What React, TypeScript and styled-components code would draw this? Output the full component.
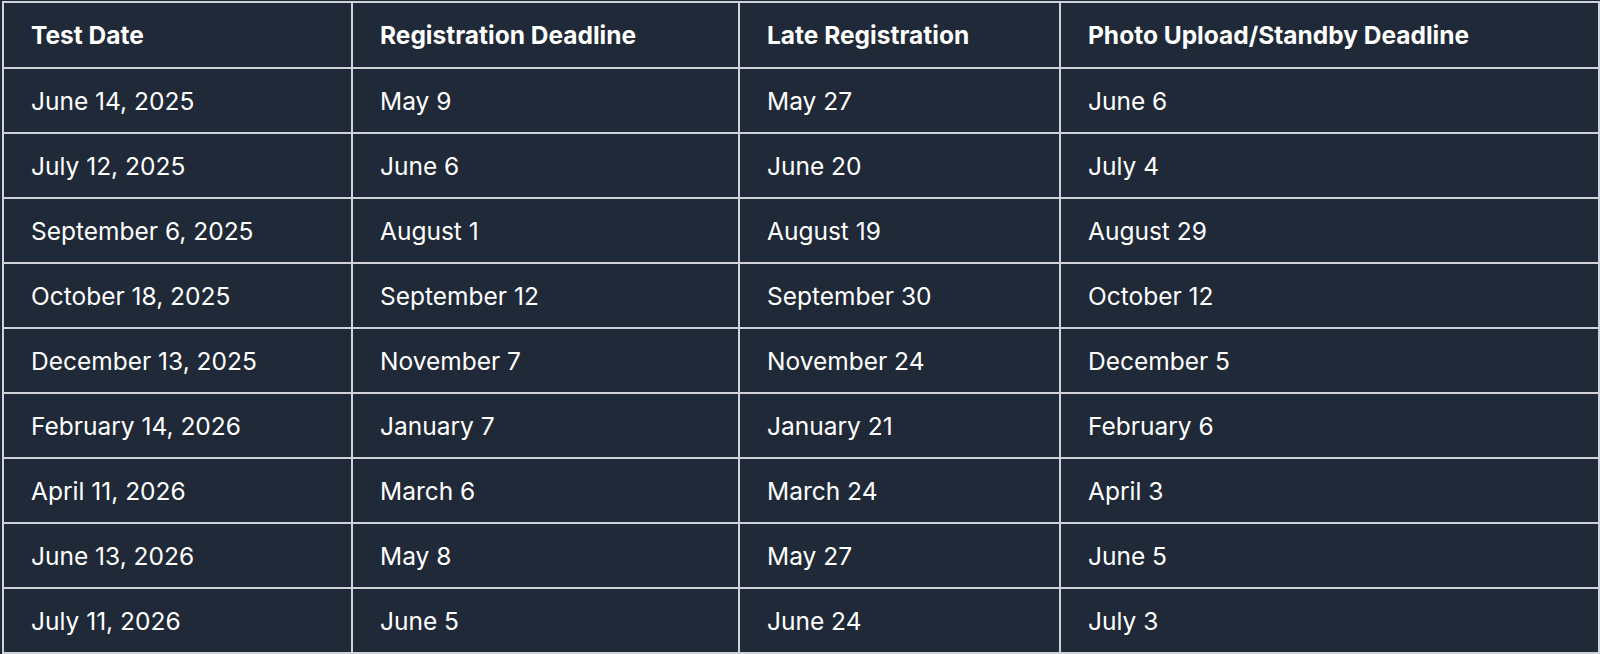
import React from "react";
import styled, { createGlobalStyle } from "styled-components";

const Global = createGlobalStyle`
  html, body { margin: 0; padding: 0; background: #1f2937; }
  body { font-family: Inter, "Noto Sans", sans-serif; }
`;

const Wrap = styled.div`
  padding: 1px 2px 1px 2px;
`;

const Table = styled.table`
  width: 100%;
  border-collapse: collapse;
  background: #1f2937;
  color: #ffffff;
  table-layout: fixed;
`;

const Th = styled.th`
  height: 66px;
  padding: 0 27px;
  text-align: left;
  font-weight: 700;
  font-size: 24.5px;
  border: 2px solid #cfd3d9;
  box-sizing: border-box;
`;

const Td = styled.td`
  height: 65px;
  padding: 0 27px;
  text-align: left;
  font-weight: 400;
  font-size: 24.5px;
  border: 2px solid #cfd3d9;
  box-sizing: border-box;
`;

const headers = ["Test Date", "Registration Deadline", "Late Registration", "Photo Upload/Standby Deadline"];
const widths = [349, 387, 321, 539];

const rows = [
  ["June 14, 2025", "May 9", "May 27", "June 6"],
  ["July 12, 2025", "June 6", "June 20", "July 4"],
  ["September 6, 2025", "August 1", "August 19", "August 29"],
  ["October 18, 2025", "September 12", "September 30", "October 12"],
  ["December 13, 2025", "November 7", "November 24", "December 5"],
  ["February 14, 2026", "January 7", "January 21", "February 6"],
  ["April 11, 2026", "March 6", "March 24", "April 3"],
  ["June 13, 2026", "May 8", "May 27", "June 5"],
  ["July 11, 2026", "June 5", "June 24", "July 3"],
];

export default function App() {
  return (
    <>
      <Global />
      <Wrap>
        <Table>
          <colgroup>
            {widths.map((w, i) => (
              <col key={i} style={{ width: w }} />
            ))}
          </colgroup>
          <thead>
            <tr>
              {headers.map((h) => (
                <Th key={h}>{h}</Th>
              ))}
            </tr>
          </thead>
          <tbody>
            {rows.map((r, i) => (
              <tr key={i}>
                {r.map((c, j) => (
                  <Td key={j}>{c}</Td>
                ))}
              </tr>
            ))}
          </tbody>
        </Table>
      </Wrap>
    </>
  );
}
